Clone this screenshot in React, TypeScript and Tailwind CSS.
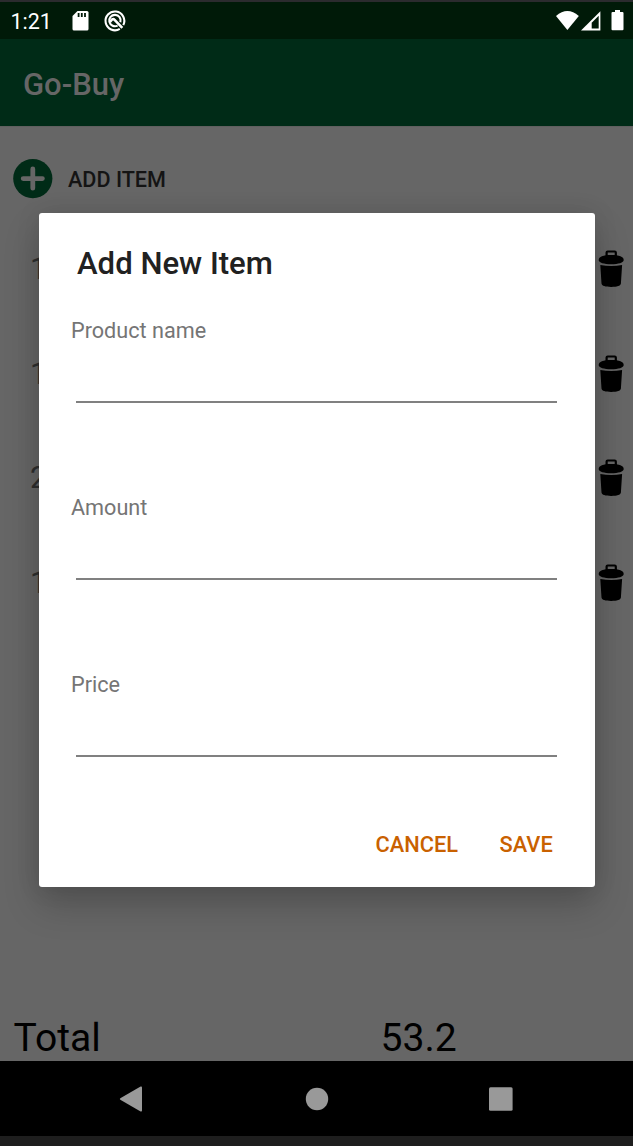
import React, { useState } from 'react';

interface Item {
  id: number;
  amount: number;
}

const items: Item[] = [
  { id: 1, amount: 1 },
  { id: 2, amount: 1 },
  { id: 3, amount: 2 },
  { id: 4, amount: 1 },
];

const fields = ['Product name', 'Amount', 'Price'];

function TrashIcon() {
  return (
    <svg width="26" height="38" viewBox="0 0 26 38" aria-hidden="true">
      <path d="M8.6 7V2.6Q8.6 1.5 9.7 1.5H16.7Q17.8 1.5 17.8 2.6V7" fill="none" stroke="#000" strokeWidth="2.2" />
      <path d="M0.7 10C0.7 6.8 5.2 5 13.2 5S25.7 6.8 25.7 10C25.7 12.8 20.4 14.2 13.2 14.2S0.7 12.8 0.7 10Z" />
      <path d="M2.3 15Q13.2 17.2 24.1 15L22.9 33.6C22.7 36 19 37 13.2 37S3.7 36 3.5 33.6Z" />
    </svg>
  );
}

function StatusBar() {
  return (
    <div className="flex h-[37px] items-center bg-[#001a08] pl-[10.5px] pr-[9px] text-white">
      <span className="w-[60.5px] pt-0.5 text-[21.5px] leading-[35px]">1:21</span>
      {/* SD card */}
      <svg width="18" height="20" viewBox="0 0 18 20" aria-hidden="true">
        <path d="M6.5 0H16Q17.5 0 17.5 1.5V18Q17.5 19.5 16 19.5H3Q1.5 19.5 1.5 18V5Z" fill="#fff" />
        <path d="M6.7 2H8.5V6H6.7ZM9.9 2H11.7V6H9.9ZM13.1 2H14.9V6H13.1Z" fill="#001a08" />
      </svg>
      {/* Debug notification */}
      <svg className="ml-3.5" width="24" height="24" viewBox="0 0 24 24" fill="none" stroke="#fff" aria-hidden="true">
        <path d="M16.8 19.9A9.4 9.4 0 1 1 20.3 16.1" strokeWidth="2.1" />
        <path d="M14.6 16.6A5.7 5.7 0 1 1 17.4 13.2" strokeWidth="2.1" />
        <path d="M7 12.8L9.2 10.4Q10.4 9.6 11.6 10.8L19.3 18.9" strokeWidth="2.6" />
      </svg>
      <div className="ml-auto flex items-center">
        <svg width="24" height="20" viewBox="0 0 24 20" fill="#fff" aria-hidden="true">
          <path d="M1 5Q12.4 -5 23.8 5L12.4 19Z" />
        </svg>
        <svg className="ml-px" width="21" height="20" viewBox="0 0 21 20" aria-hidden="true">
          <path d="M1 19.4L20.4 0.2V19.4Z" fill="#fff" />
          <path d="M11.7 11.8L18.7 4.8V17.6H11.7Z" fill="#001a08" />
        </svg>
        <svg className="ml-2.5" width="13" height="21" viewBox="0 0 13 21" fill="#fff" aria-hidden="true">
          <path d="M4 0H9V2H11.4Q12.5 2 12.5 3.1V19.2Q12.5 20.3 11.4 20.3H1.6Q0.5 20.3 0.5 19.2V3.1Q0.5 2 1.6 2H4Z" />
        </svg>
      </div>
    </div>
  );
}

function NavigationBar() {
  return (
    <div className="flex h-[75px] items-center bg-black pl-[119px]">
      <svg width="395" height="28" viewBox="119 0 395 28" fill="#999" aria-hidden="true">
        <path d="M120.3 13.2L140.6 1.6Q142 1 142 2.6V25.4Q142 27 140.6 26.4L120.3 14.8Q119.3 14 120.3 13.2Z" />
        <circle cx="317" cy="14" r="11.2" />
        <rect x="489" y="2.2" width="23.6" height="23.6" rx="1.5" />
      </svg>
    </div>
  );
}

function AddItemDialog({ onClose }: { onClose: () => void }) {
  return (
    <div
      role="dialog"
      aria-label="Add New Item"
      className="absolute left-[39px] top-[213px] flex h-[674px] w-[556px] flex-col rounded-[3px] bg-white shadow-[0_18px_36px_rgba(0,0,0,0.2),0_0_24px_rgba(0,0,0,0.1)]"
    >
      <h2 className="mt-[33px] pl-[38px] text-[31.1px] font-medium leading-9 text-[#212121]">Add New Item</h2>
      <div className="mt-9">
        {fields.map((field) => (
          <label key={field} className="block h-[177px] pl-8">
            <span className="block text-[21.65px] leading-[26px] text-[#757575]">{field}</span>
            <input className="ml-[5.4px] block h-[59px] w-[481px] border-b-2 border-[#808080] text-[28px] outline-none" />
          </label>
        ))}
      </div>
      <div className="-mt-[17px] flex gap-[41.5px] pl-[336.6px] text-[21.8px] font-medium leading-[26px] text-[#c96100]">
        <button onClick={onClose}>CANCEL</button>
        <button onClick={onClose}>SAVE</button>
      </div>
    </div>
  );
}

export default function App() {
  const [open, setOpen] = useState(true);

  return (
    <div className="relative flex h-[1146px] w-[633px] flex-col overflow-hidden bg-[#666] font-['Roboto',sans-serif]">
      <div className="h-[2px] bg-[#2b2b2e]" />
      <StatusBar />
      <header className="flex h-[87px] items-center bg-[#002b17] pl-[23px] pt-1.5 text-[31px] font-medium text-[#666]">
        Go-Buy
      </header>

      <main className="flex flex-1 flex-col border-t border-[#5f5f5f]">
        <button onClick={() => setOpen(true)} className="mt-8 flex h-10 items-center gap-[15px] pl-[13px] text-[21.6px] font-medium text-[#141414]">
          <svg width="40" height="40" viewBox="0 0 40 40" aria-hidden="true">
            <circle cx="19.8" cy="19.6" r="19.6" fill="#002b17" />
            <path d="M19.8 10V29.2M10.2 19.6H29.4" stroke="#666" strokeWidth="4.8" strokeLinecap="round" />
          </svg>
          <span className="pt-0.5">ADD ITEM</span>
        </button>
        <div className="mt-[18px]">
          {items.map((item) => (
            <div key={item.id} className="flex h-[104.5px] items-center justify-between pl-[30px] pr-[9px]">
              <span className="text-[30.5px] text-[#2e2e2e]">{item.amount}</span>
              <TrashIcon />
            </div>
          ))}
        </div>
        <div className="mt-auto flex text-[39.1px] leading-[46px] text-black">
          <span className="w-[380.5px] pl-[13.5px]">Total</span>
          <span>53.2</span>
        </div>
      </main>

      <NavigationBar />
      <div className="h-[10px] bg-[#1e1e1e]" />

      {open && <AddItemDialog onClose={() => setOpen(false)} />}
    </div>
  );
}
